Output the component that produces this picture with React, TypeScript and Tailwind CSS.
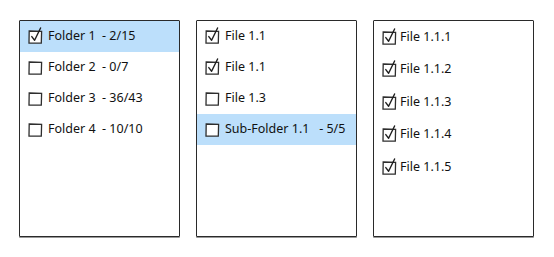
import React from 'react';

type Item = { label: string; checked: boolean; active?: boolean };

const folders: Item[] = [
  { label: 'Folder 1  - 2/15', checked: true, active: true },
  { label: 'Folder 2  - 0/7', checked: false },
  { label: 'Folder 3  - 36/43', checked: false },
  { label: 'Folder 4  - 10/10', checked: false },
];

const files: Item[] = [
  { label: 'File 1.1', checked: true },
  { label: 'File 1.1', checked: true },
  { label: 'File 1.3', checked: false },
  { label: 'Sub-Folder 1.1   - 5/5', checked: false, active: true },
];

const subFiles: Item[] = [
  { label: 'File 1.1.1', checked: true },
  { label: 'File 1.1.2', checked: true },
  { label: 'File 1.1.3', checked: true },
  { label: 'File 1.1.4', checked: true },
  { label: 'File 1.1.5', checked: true },
];

// sketchy checkbox, the tick pokes out of the top
const Box = ({ checked }: { checked: boolean }) => (
  <svg width="15" height="17" viewBox="0 0 15 17" className="shrink-0 -mt-[2px]">
    <path d="M1.2 4 L13.6 4.3 L13.3 16.2 L1 16 Z" fill="white" stroke="#2e2e2e" strokeWidth="1.3" />
    {checked && (
      <path d="M3.8 9.6 L6.6 13.2 L12.6 1" fill="none" stroke="#1e1e1e" strokeWidth="1.4" strokeLinecap="round" strokeLinejoin="round" />
    )}
  </svg>
);

const Panel = ({ items, rowH, gap }: { items: Item[]; rowH: string; gap: string }) => (
  <div className="w-[161px] h-[217px] border-[1.5px] border-[#2a2a2a] rounded-[1px] bg-white shadow-[0_1px_0_#999]">
    {items.map((it, i) => (
      <div
        key={i}
        className={`${rowH} flex items-center pl-2 ${gap} ${it.active ? 'bg-[#bcdffb]' : ''}`}
      >
        <Box checked={it.checked} />
        <span className="whitespace-pre text-[12.5px] text-[#111]">{it.label}</span>
      </div>
    ))}
  </div>
);

export default function App() {
  return (
    <div
      className="w-[554px] h-[257px] bg-white flex gap-[16px] pl-[19px] pt-[20px]"
      style={{ fontFamily: '"Comic Sans MS", "Noto Sans", sans-serif' }}
    >
      <Panel items={folders} rowH="h-[31px]" gap="gap-[5px]" />
      <Panel items={files} rowH="h-[31px]" gap="gap-[5px]" />
      <Panel items={subFiles} rowH="h-[32.5px]" gap="gap-[3px]" />
    </div>
  );
}
